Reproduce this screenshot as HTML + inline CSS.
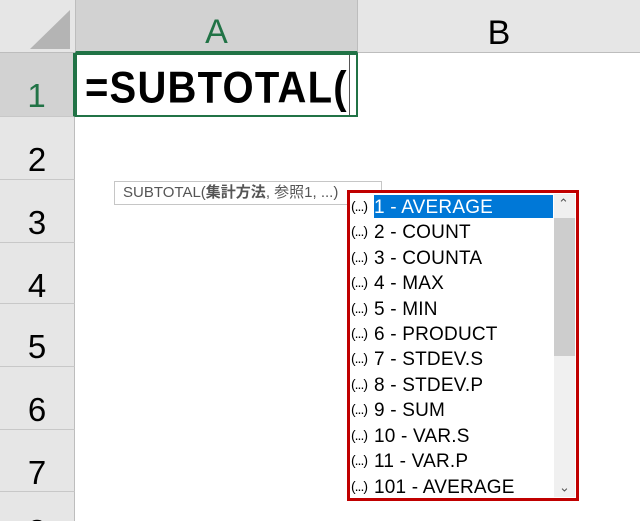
<!DOCTYPE html>
<html><head><meta charset="utf-8"><style>
html,body{margin:0;width:640px;height:521px;overflow:hidden;background:#fff;font-family:"Liberation Sans",Arial,sans-serif;position:relative}
.a{position:absolute}
.rh{position:absolute;left:0;width:75px;background:#e6e6e6;border-bottom:1px solid #c8c8c8;border-right:1px solid #bdbdbd;box-sizing:border-box;text-align:center;font-size:33px;color:#000}
.it{position:absolute;left:351px;height:24px;line-height:24px;font-size:19px;letter-spacing:0.2px;color:#000;white-space:nowrap}
.it i{font-style:normal;display:inline-block;width:23px;font-size:14px;vertical-align:2px;letter-spacing:-1px}
</style></head><body>
<div class="a" style="left:0;top:0;width:640px;height:53px;background:#e6e6e6;border-bottom:1px solid #bdbdbd;box-sizing:border-box"></div>
<svg class="a" style="left:0;top:0" width="75" height="53"><polygon points="30,49 70,49 70,10" fill="#b4b4b4"/></svg>
<div class="a" style="left:75px;top:0;width:283px;height:53px;background:#d2d2d2;border-bottom:2px solid #217346;border-left:1px solid #bdbdbd;border-right:1px solid #bdbdbd;box-sizing:border-box;text-align:center;font-size:34px;line-height:64px;color:#217346">A</div>
<div class="a" style="left:358px;top:0;width:282px;height:53px;text-align:center;font-size:34px;line-height:66px">B</div>
<div class="rh" style="top:53px;height:64px;line-height:86px;background:#d2d2d2;color:#217346;border-right:2px solid #217346">1</div>
<div class="rh" style="top:117px;height:63px;line-height:86px">2</div>
<div class="rh" style="top:180px;height:63px;line-height:86px">3</div>
<div class="rh" style="top:243px;height:61px;line-height:86px">4</div>
<div class="rh" style="top:304px;height:63px;line-height:86px">5</div>
<div class="rh" style="top:367px;height:63px;line-height:86px">6</div>
<div class="rh" style="top:430px;height:62px;line-height:86px">7</div>
<div class="rh" style="top:492px;height:29px;line-height:80px;overflow:hidden;border-bottom:none">8</div>
<div class="a" style="left:75px;top:53px;width:283px;height:64px;border:2px solid #217346;box-sizing:border-box"></div>
<div class="a" style="left:85px;top:60px;font-size:40px;font-weight:bold;letter-spacing:1.2px;line-height:50px;transform:scaleY(1.12);transform-origin:top left">=SUBTOTAL(</div>
<div class="a" style="left:349px;top:55px;width:1px;height:60px;background:#555"></div>
<div class="a" style="left:114px;top:181px;width:268px;height:24px;border:1px solid #c6c6c6;background:#fff;box-sizing:border-box;font-size:15px;line-height:22px;color:#555;padding-left:8px;white-space:nowrap;font-family:'Liberation Sans','Noto Sans CJK JP',sans-serif">SUBTOTAL(<b>集計方法</b>, 参照1, ...)</div>
<div class="a" style="left:347px;top:190px;width:232px;height:311px;border:3px solid #c00000;box-sizing:border-box;background:#fff"></div>
<div class="a" style="left:554px;top:194px;width:21px;height:303px;background:#f0f0f0"></div>
<div class="a" style="left:554px;top:218px;width:21px;height:138px;background:#cdcdcd"></div>
<div class="a" style="left:558px;top:196px;font-size:13px;color:#555">&#8963;</div>
<div class="a" style="left:559px;top:478px;font-size:13px;color:#555;transform:scaleY(-1)">&#8963;</div>
<div class="a" style="left:374px;top:195px;width:179px;height:23px;background:#0078d7"></div>
<div class="it" style="top:194px"><i>(...)</i><span style="color:#fff">1 - AVERAGE</span></div>
<div class="it" style="top:219px"><i>(...)</i>2 - COUNT</div>
<div class="it" style="top:245px"><i>(...)</i>3 - COUNTA</div>
<div class="it" style="top:270px"><i>(...)</i>4 - MAX</div>
<div class="it" style="top:296px"><i>(...)</i>5 - MIN</div>
<div class="it" style="top:321px"><i>(...)</i>6 - PRODUCT</div>
<div class="it" style="top:346px"><i>(...)</i>7 - STDEV.S</div>
<div class="it" style="top:372px"><i>(...)</i>8 - STDEV.P</div>
<div class="it" style="top:397px"><i>(...)</i>9 - SUM</div>
<div class="it" style="top:423px"><i>(...)</i>10 - VAR.S</div>
<div class="it" style="top:448px"><i>(...)</i>11 - VAR.P</div>
<div class="it" style="top:474px"><i>(...)</i>101 - AVERAGE</div>
</body></html>
